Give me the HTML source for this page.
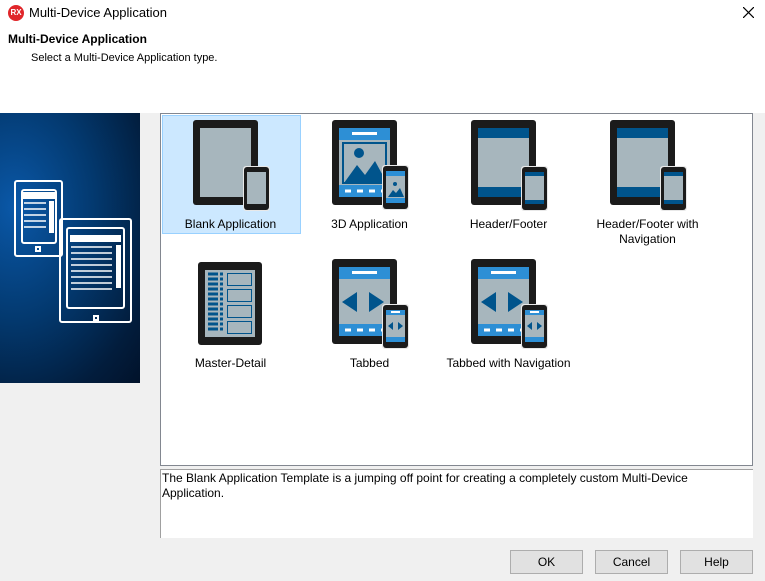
<!DOCTYPE html>
<html><head><meta charset="utf-8"><style>
body{margin:0;width:765px;height:581px;background:#f0f0f0;font-family:"Liberation Sans",sans-serif;font-size:12px;color:#000;position:relative;overflow:hidden}
.a{position:absolute}
.btn{position:absolute;top:550px;width:71px;height:22px;border:1px solid #adadad;background:#e1e1e1;text-align:center;line-height:22px;font-size:12px}
.lbl{position:absolute;width:139px;text-align:center;font-size:12px;line-height:15px}
</style></head><body>
<div class="a" style="left:0;top:0;width:765px;height:113px;background:#fff"></div>
<div class="a" style="left:8px;top:5px;width:16px;height:16px;border-radius:50%;background:#e0262a;color:#fff;font-size:8px;font-weight:bold;line-height:16px;text-align:center">RX</div>
<div class="a" style="left:29px;top:5px;font-size:13px">Multi-Device Application</div>
<svg class="a" style="left:743px;top:7px" width="11" height="11"><path d="M0 0L11 11M11 0L0 11" stroke="#000" stroke-width="1.2"/></svg>
<div class="a" style="left:8px;top:32px;font-weight:bold;font-size:12px">Multi-Device Application</div>
<div class="a" style="left:31px;top:52px;font-size:11px">Select a Multi-Device Application type.</div>

<div class="a" style="left:0;top:113px;width:140px;height:270px;background:radial-gradient(ellipse at 10% 35%,#0a58a8 0%,#03396f 45%,#021d3d 80%,#01122a 100%)">
<svg width="140" height="270" viewBox="0 113 140 270" fill="none" stroke="#fff" stroke-width="2">
<rect x="15" y="181" width="47" height="75" rx="2"/>
<rect x="22" y="190" width="34" height="53" rx="2"/>
<rect x="60" y="219" width="71" height="103" rx="2"/>
<rect x="67" y="228" width="57" height="80" rx="2"/>
<g stroke-width="1.5"><path d="M24 203h22M24 209h22M24 215h22M24 221h22M24 227h22M71 247h41M71 253h41M71 259h41M71 265h41M71 271h41M71 277h41M71 283h41M71 289h41"/></g>
<rect x="36" y="247" width="4" height="4"/><rect x="94" y="316" width="4" height="4"/>
<g fill="#fff" stroke="none"><rect x="23" y="192" width="32" height="7"/><rect x="49" y="201" width="5" height="32"/><rect x="70" y="235" width="51" height="7"/><rect x="116" y="245" width="5" height="43"/></g>
</svg></div>

<div class="a" style="left:160px;top:113px;width:591px;height:351px;background:#fff;border:1px solid #828790"></div>
<div class="a" style="left:162px;top:115px;width:137px;height:117px;background:#cce8ff;border:1px solid #99d1ff"></div>

<svg class="a" style="left:0;top:0" width="765" height="581">
<defs>
<g id="tab"><rect x="0" y="0" width="65" height="85" rx="3" fill="#1b1b1b"/><rect x="7" y="8" width="51" height="69" fill="#a7b6bd"/></g>
<g id="ph"><rect x="-1" y="-1" width="27" height="45" rx="3" fill="#e8e8e8"/><rect x="0" y="0" width="25" height="43" rx="3" fill="#1b1b1b"/><rect x="3" y="5" width="19" height="32" fill="#a7b6bd"/></g>
</defs>
<use href="#tab" x="193" y="120"/><use href="#ph" x="244" y="167"/>
<g transform="translate(332,120)"><use href="#tab"/><rect x="7" y="8" width="51" height="12" fill="#2d8fd5"/><rect x="20" y="12" width="25" height="3" fill="#fff"/><rect x="11" y="23" width="43" height="40" fill="none" stroke="#00548c" stroke-width="2"/><circle cx="27" cy="33" r="5" fill="#00548c"/><path d="M12 63l13-18 8 10 10-14 12 22z" fill="#00548c"/><rect x="7" y="65" width="51" height="12" fill="#2d8fd5"/><path d="M13 71h6M25 71h6M37 71h6M49 71h5" stroke="#fff" stroke-width="3"/></g>
<g transform="translate(383,166)"><use href="#ph"/><rect x="3" y="5" width="19" height="5" fill="#2d8fd5"/><rect x="3" y="32" width="19" height="5" fill="#2d8fd5"/><circle cx="12" cy="18" r="2" fill="#00548c"/><path d="M5 31l5-7 3 3 4-5 4 9z" fill="#00548c"/></g>
<g transform="translate(471,120)"><use href="#tab"/><rect x="7" y="8" width="51" height="10" fill="#00548c"/><rect x="7" y="67" width="51" height="10" fill="#00548c"/></g>
<g transform="translate(522,167)"><use href="#ph"/><rect x="3" y="5" width="19" height="4" fill="#00548c"/><rect x="3" y="33" width="19" height="4" fill="#00548c"/></g>
<g transform="translate(610,120)"><use href="#tab"/><rect x="7" y="8" width="51" height="10" fill="#00548c"/><rect x="7" y="67" width="51" height="10" fill="#00548c"/></g>
<g transform="translate(661,167)"><use href="#ph"/><rect x="3" y="5" width="19" height="4" fill="#00548c"/><rect x="3" y="33" width="19" height="4" fill="#00548c"/></g>
<g transform="translate(198,262)"><rect width="64" height="83" rx="3" fill="#1b1b1b"/><rect x="7" y="8" width="50" height="67" fill="#a7b6bd"/>
<path d="M10 12h10M10 17h10M10 22h10M10 27h10M10 32h10M10 37h10M10 42h10M10 47h10M10 52h10M10 57h10M10 62h10M10 67h10M22 12h3M22 17h3M22 22h3M22 27h3M22 32h3M22 37h3M22 42h3M22 47h3M22 52h3M22 57h3M22 62h3M22 67h3" stroke="#00548c" stroke-width="3"/>
<g fill="none" stroke="#00548c"><rect x="29.5" y="11.5" width="24" height="12"/><rect x="29.5" y="27.5" width="24" height="12"/><rect x="29.5" y="43.5" width="24" height="12"/><rect x="29.5" y="59.5" width="24" height="12"/></g></g>
<g transform="translate(332,259)"><use href="#tab"/><rect x="7" y="8" width="51" height="12" fill="#2d8fd5"/><rect x="20" y="12" width="25" height="3" fill="#fff"/><path d="M10 43l15-10v20zM37 33l15 10-15 10z" fill="#00548c"/><rect x="7" y="65" width="51" height="12" fill="#2d8fd5"/><path d="M13 71h6M25 71h6M37 71h6M49 71h5" stroke="#fff" stroke-width="3"/></g>
<g transform="translate(383,305)"><use href="#ph"/><rect x="3" y="5" width="19" height="5" fill="#2d8fd5"/><rect x="8" y="6" width="9" height="2" fill="#fff"/><path d="M5 21l5-4v8zM15 17l5 4-5 4z" fill="#00548c"/><rect x="3" y="32" width="19" height="5" fill="#2d8fd5"/></g>
<g transform="translate(471,259)"><use href="#tab"/><rect x="7" y="8" width="51" height="12" fill="#2d8fd5"/><rect x="20" y="12" width="25" height="3" fill="#fff"/><path d="M10 43l15-10v20zM37 33l15 10-15 10z" fill="#00548c"/><rect x="7" y="65" width="51" height="12" fill="#2d8fd5"/><path d="M13 71h6M25 71h6M37 71h6M49 71h5" stroke="#fff" stroke-width="3"/></g>
<g transform="translate(522,305)"><use href="#ph"/><rect x="3" y="5" width="19" height="5" fill="#2d8fd5"/><rect x="8" y="6" width="9" height="2" fill="#fff"/><path d="M5 21l5-4v8zM15 17l5 4-5 4z" fill="#00548c"/><rect x="3" y="32" width="19" height="5" fill="#2d8fd5"/></g>
</svg>

<div class="lbl" style="left:161px;top:217px">Blank Application</div>
<div class="lbl" style="left:300px;top:217px">3D Application</div>
<div class="lbl" style="left:439px;top:217px">Header/Footer</div>
<div class="lbl" style="left:578px;top:217px">Header/Footer with<br>Navigation</div>
<div class="lbl" style="left:161px;top:356px">Master-Detail</div>
<div class="lbl" style="left:300px;top:356px">Tabbed</div>
<div class="lbl" style="left:439px;top:356px">Tabbed with Navigation</div>

<div class="a" style="left:160px;top:469px;width:592px;height:68px;background:#fff;border-top:1px solid #a0a0a0;border-left:1px solid #a0a0a0"></div>
<div class="a" style="left:162px;top:471px;width:580px;line-height:15px;font-size:12px">The Blank Application Template is a jumping off point for creating a completely custom Multi-Device Application.</div>

<div class="btn" style="left:510px">OK</div>
<div class="btn" style="left:595px">Cancel</div>
<div class="btn" style="left:680px">Help</div>
</body></html>
